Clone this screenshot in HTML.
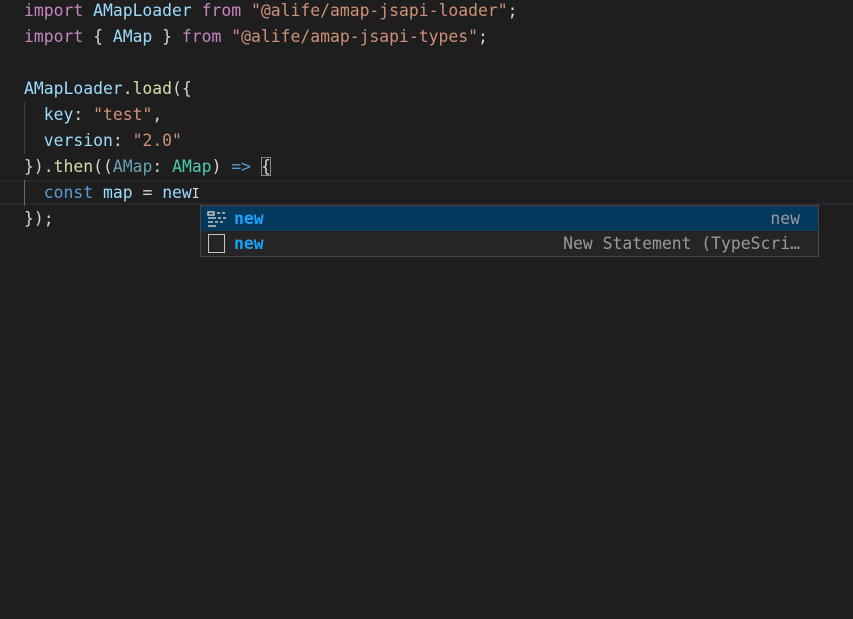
<!DOCTYPE html>
<html><head><style>
body{margin:0;background:#1e1e1e;width:853px;height:619px;overflow:hidden;position:relative;font-family:"DejaVu Sans Mono",monospace;}
.l{position:absolute;left:24px;font-size:16.4px;line-height:26px;height:26px;white-space:pre;color:#d4d4d4;}
.k{color:#c586c0}.v{color:#9cdcfe}.s{color:#ce9178}.f{color:#dcdcaa}.c{color:#569cd6}.t{color:#4ec9b0}.p{color:#6a9fb5}
.guide{position:absolute;left:24px;width:1px;background:#404040;}
.cur{position:absolute;left:0;right:0;top:180px;height:25px;border-top:2px solid #282828;border-bottom:2px solid #282828;box-sizing:border-box;}
.sug{position:absolute;left:200px;top:205px;width:619px;height:52px;background:#252526;border:1px solid #454545;box-sizing:border-box;}
.row{position:absolute;left:0;right:0;height:25px;font-size:16.4px;line-height:25px;}
.hl{color:#18a3ff;font-weight:bold;position:absolute;left:33px;}
.det{position:absolute;right:18px;color:#9a9a9a;}
</style></head><body>
<div class="cur"></div>
<div class="guide" style="top:102px;height:52px"></div>
<div class="guide" style="top:180px;height:26px;background:#6a6a6a"></div>
<div class="l" style="top:-2px"><span class="k">import</span> <span class="v">AMapLoader</span> <span class="k">from</span> <span class="s">"@alife/amap-jsapi-loader"</span>;</div>
<div class="l" style="top:24px"><span class="k">import</span> { <span class="v">AMap</span> } <span class="k">from</span> <span class="s">"@alife/amap-jsapi-types"</span>;</div>
<div class="l" style="top:76px"><span class="v">AMapLoader</span>.<span class="f">load</span>({</div>
<div class="l" style="top:102px">  <span class="v">key</span>: <span class="s">"test"</span>,</div>
<div class="l" style="top:128px">  <span class="v">version</span>: <span class="s">"2.0"</span></div>
<div class="l" style="top:154px">}).<span class="f">then</span>((<span class="p">AMap</span>: <span class="t">AMap</span>) <span class="c">=&gt;</span> <span style="outline:1px solid #888;outline-offset:-1px">{</span></div>
<div class="l" style="top:180px">  <span class="c">const</span> <span class="v">map</span> = <span class="v">new</span><span style="color:#ddd;font-size:13px">I</span></div>
<div class="l" style="top:206px">});</div>
<div class="sug">
 <div class="row" style="top:0;background:#04395e">
  <svg style="position:absolute;left:6px;top:5px" width="20" height="16" stroke="#c5c5c5" stroke-width="1.5" fill="none"><rect x="1" y="1" width="6" height="3"/><path d="M10 2h3M15 2h3M1 7h8M11 7h3M16 7h3M1 11h5M8 11h3M13 11h3M1 15h8"/></svg>
  <span class="hl">new</span><span class="det">new</span></div>
 <div class="row" style="top:25px">
  <svg style="position:absolute;left:7px;top:3px" width="18" height="20" stroke="#c5c5c5" fill="none"><rect x="0.5" y="0.5" width="16" height="18"/></svg>
  <span class="hl">new</span><span class="det">New Statement (TypeScri…</span></div>
</div>
</body></html>
